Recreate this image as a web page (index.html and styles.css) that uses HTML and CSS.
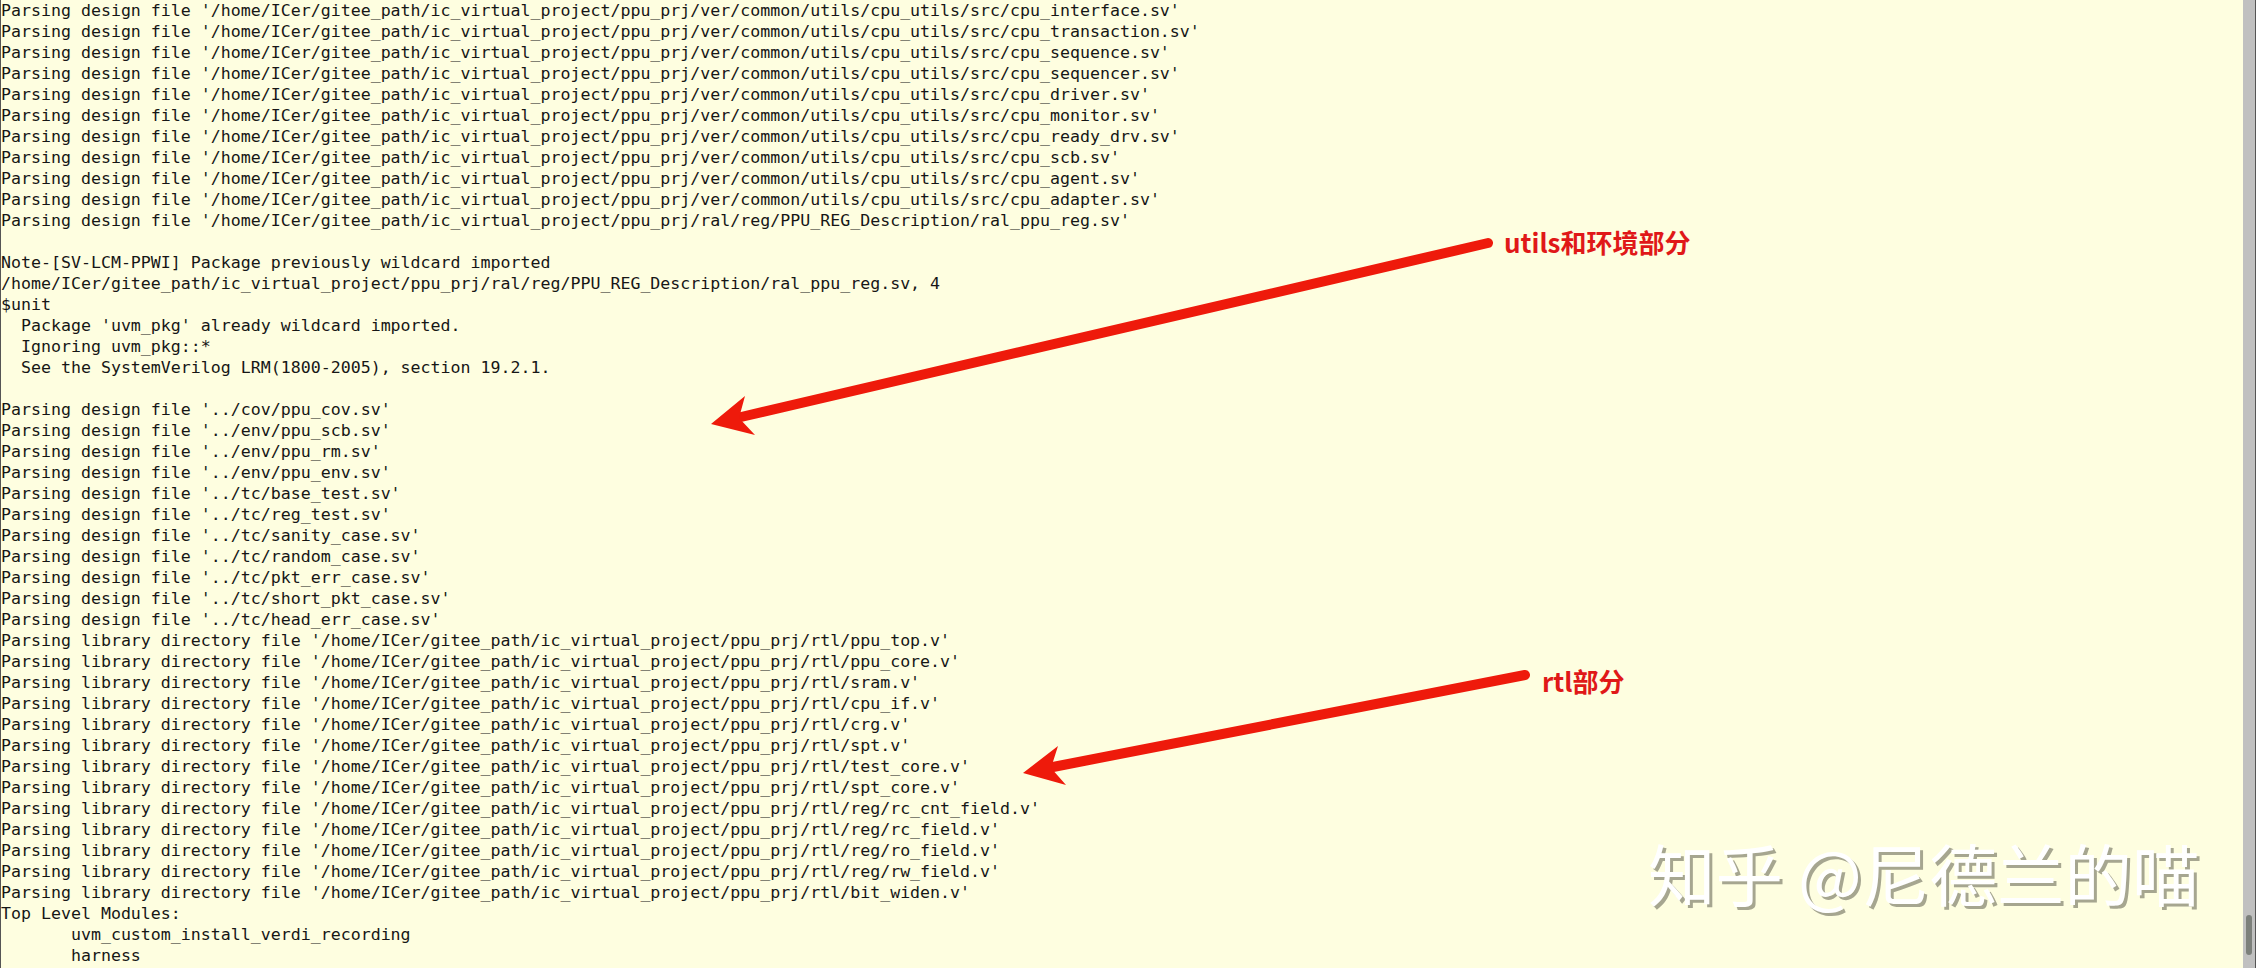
FILE: index.html
```html
<!DOCTYPE html>
<html lang="en">
<head>
<meta charset="utf-8">
<title>vcs compile log</title>
<link rel="stylesheet" href="styles.css">
</head>
<body>
<div class="screen">
<pre class="log">Parsing design file '/home/ICer/gitee_path/ic_virtual_project/ppu_prj/ver/common/utils/cpu_utils/src/cpu_interface.sv'
Parsing design file '/home/ICer/gitee_path/ic_virtual_project/ppu_prj/ver/common/utils/cpu_utils/src/cpu_transaction.sv'
Parsing design file '/home/ICer/gitee_path/ic_virtual_project/ppu_prj/ver/common/utils/cpu_utils/src/cpu_sequence.sv'
Parsing design file '/home/ICer/gitee_path/ic_virtual_project/ppu_prj/ver/common/utils/cpu_utils/src/cpu_sequencer.sv'
Parsing design file '/home/ICer/gitee_path/ic_virtual_project/ppu_prj/ver/common/utils/cpu_utils/src/cpu_driver.sv'
Parsing design file '/home/ICer/gitee_path/ic_virtual_project/ppu_prj/ver/common/utils/cpu_utils/src/cpu_monitor.sv'
Parsing design file '/home/ICer/gitee_path/ic_virtual_project/ppu_prj/ver/common/utils/cpu_utils/src/cpu_ready_drv.sv'
Parsing design file '/home/ICer/gitee_path/ic_virtual_project/ppu_prj/ver/common/utils/cpu_utils/src/cpu_scb.sv'
Parsing design file '/home/ICer/gitee_path/ic_virtual_project/ppu_prj/ver/common/utils/cpu_utils/src/cpu_agent.sv'
Parsing design file '/home/ICer/gitee_path/ic_virtual_project/ppu_prj/ver/common/utils/cpu_utils/src/cpu_adapter.sv'
Parsing design file '/home/ICer/gitee_path/ic_virtual_project/ppu_prj/ral/reg/PPU_REG_Description/ral_ppu_reg.sv'

Note-[SV-LCM-PPWI] Package previously wildcard imported
/home/ICer/gitee_path/ic_virtual_project/ppu_prj/ral/reg/PPU_REG_Description/ral_ppu_reg.sv, 4
$unit
  Package 'uvm_pkg' already wildcard imported.
  Ignoring uvm_pkg::*
  See the SystemVerilog LRM(1800-2005), section 19.2.1.

Parsing design file '../cov/ppu_cov.sv'
Parsing design file '../env/ppu_scb.sv'
Parsing design file '../env/ppu_rm.sv'
Parsing design file '../env/ppu_env.sv'
Parsing design file '../tc/base_test.sv'
Parsing design file '../tc/reg_test.sv'
Parsing design file '../tc/sanity_case.sv'
Parsing design file '../tc/random_case.sv'
Parsing design file '../tc/pkt_err_case.sv'
Parsing design file '../tc/short_pkt_case.sv'
Parsing design file '../tc/head_err_case.sv'
Parsing library directory file '/home/ICer/gitee_path/ic_virtual_project/ppu_prj/rtl/ppu_top.v'
Parsing library directory file '/home/ICer/gitee_path/ic_virtual_project/ppu_prj/rtl/ppu_core.v'
Parsing library directory file '/home/ICer/gitee_path/ic_virtual_project/ppu_prj/rtl/sram.v'
Parsing library directory file '/home/ICer/gitee_path/ic_virtual_project/ppu_prj/rtl/cpu_if.v'
Parsing library directory file '/home/ICer/gitee_path/ic_virtual_project/ppu_prj/rtl/crg.v'
Parsing library directory file '/home/ICer/gitee_path/ic_virtual_project/ppu_prj/rtl/spt.v'
Parsing library directory file '/home/ICer/gitee_path/ic_virtual_project/ppu_prj/rtl/test_core.v'
Parsing library directory file '/home/ICer/gitee_path/ic_virtual_project/ppu_prj/rtl/spt_core.v'
Parsing library directory file '/home/ICer/gitee_path/ic_virtual_project/ppu_prj/rtl/reg/rc_cnt_field.v'
Parsing library directory file '/home/ICer/gitee_path/ic_virtual_project/ppu_prj/rtl/reg/rc_field.v'
Parsing library directory file '/home/ICer/gitee_path/ic_virtual_project/ppu_prj/rtl/reg/ro_field.v'
Parsing library directory file '/home/ICer/gitee_path/ic_virtual_project/ppu_prj/rtl/reg/rw_field.v'
Parsing library directory file '/home/ICer/gitee_path/ic_virtual_project/ppu_prj/rtl/bit_widen.v'
Top Level Modules:
       uvm_custom_install_verdi_recording
       harness</pre>
<div class="scrollbar"><div class="thumb"></div></div>
</div>

<svg class="arrows" width="2256" height="968" viewBox="0 0 2256 968" aria-hidden="true">
  <line x1="741" y1="417" x2="1488" y2="243" class="shaft"/>
  <polygon points="711,424 745,396 739,418 755,435" class="head"/>
  <line x1="1053" y1="767" x2="1525" y2="675" class="shaft"/>
  <polygon points="1023,773 1058,746 1051,768 1066,785" class="head"/>
</svg>
<div class="label label-utils">utils和环境部分</div>
<div class="label label-rtl">rtl部分</div>
<div class="watermark">知乎 @尼德兰的喵</div>
</body>
</html>
```

FILE: styles.css
```css
html, body {
  margin: 0;
  padding: 0;
  width: 2256px;
  height: 968px;
  overflow: hidden;
  background: #fefee0;
}

.screen {
  display: flex;
  width: 2256px;
  height: 968px;
  box-sizing: border-box;
  border-left: 1px solid #555;
  background: #fefee0;
}

.log {
  flex: 1;
  margin: 0;
  overflow: hidden;
  font-family: "DejaVu Sans Mono", monospace;
  font-size: 16.6px;
  line-height: 21px;
  color: #161616;
  white-space: pre;
}

.scrollbar {
  flex: none;
  width: 13px;
  background: #c0c0c0;
  border-right: 1px solid #555;
  display: flex;
  flex-direction: column;
  justify-content: flex-end;
  padding: 0 3px 13px 3px;
  box-sizing: border-box;
}

.thumb {
  width: 6px;
  height: 40px;
  background: #7c807b;
  border-radius: 3px;
}

.arrows {
  position: absolute;
  left: 0;
  top: 0;
  pointer-events: none;
}

.shaft {
  stroke: #ee1a0b;
  stroke-width: 10;
  stroke-linecap: round;
}

.head {
  fill: #ee1a0b;
}

.label {
  position: absolute;
  font-family: "Noto Sans CJK SC", "Noto Sans", sans-serif;
  font-weight: 700;
  font-size: 26px;
  line-height: 1;
  color: #e01818;
  white-space: nowrap;
}

.label-utils {
  left: 1504px;
  top: 229px;
}

.label-rtl {
  left: 1542px;
  top: 668px;
}

.watermark {
  position: absolute;
  left: 1648px;
  top: 838px;
  font-family: "Noto Sans CJK SC", sans-serif;
  font-size: 67.5px;
  line-height: 1;
  color: #ffffff;
  text-shadow: 3px 3px 0 #a6a690;
  white-space: nowrap;
}
```
